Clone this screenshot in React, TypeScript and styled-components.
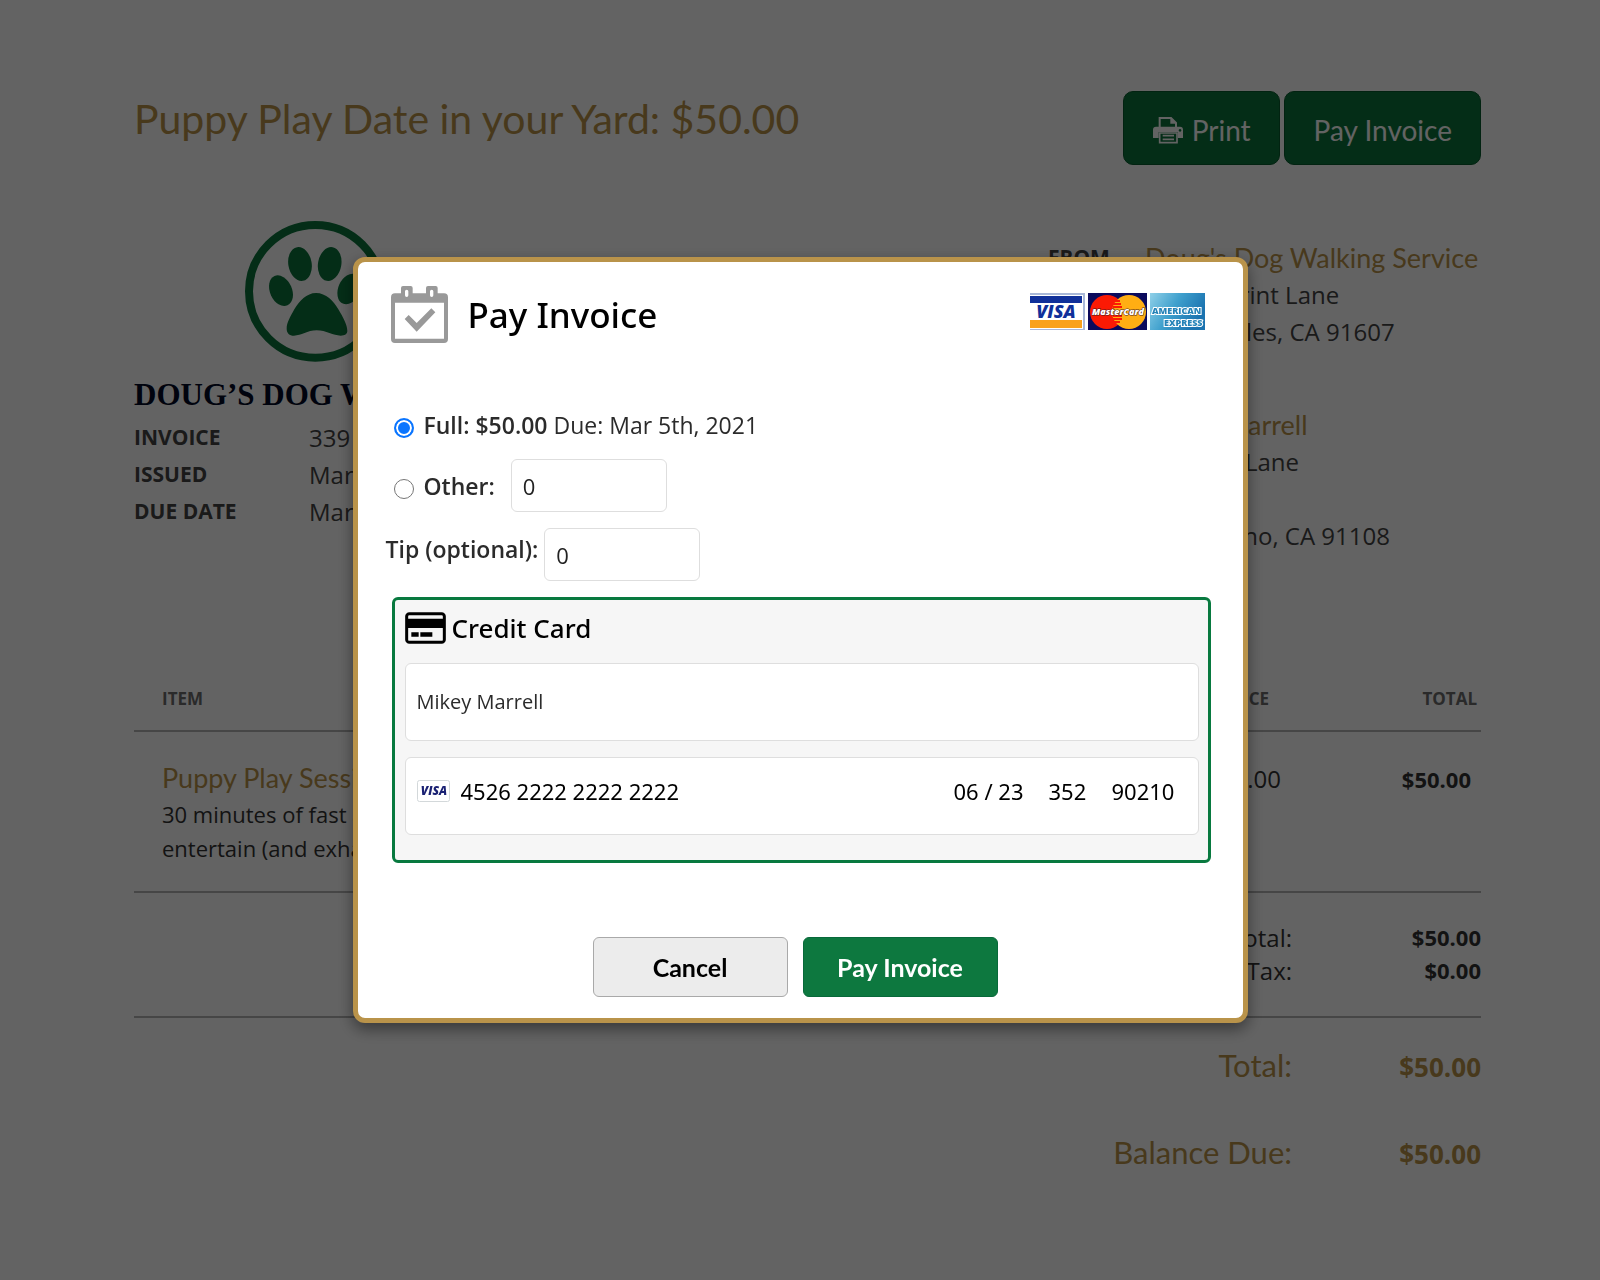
import React, { useState } from "react";
import styled, { createGlobalStyle } from "styled-components";

const sans = `"Open Sans", "Noto Sans", sans-serif`;
const lato = `Lato, "Open Sans", sans-serif`;
const gold = "#b9934a";
const green = "#0b753c";

const GlobalStyle = createGlobalStyle`
  *, *::before, *::after { box-sizing: border-box; }
  body { margin: 0; background: #fff; color: #333; font: 400 24px/34px ${sans}; }
  h1, h2, h3, p, dl, dd, dt { margin: 0; font-weight: inherit; }
  button, input { font-family: inherit; }
`;

/* ---------- invoice page ---------- */

const Page = styled.main`
  min-height: 100vh;
  padding: 91px 119px 40px 134px;
`;

const PageHeader = styled.header`
  display: flex;
  justify-content: space-between;
  align-items: flex-start;
`;

const PageTitle = styled.h1`
  font: 400 41px/56px ${lato};
  color: ${gold};
`;

const HeaderActions = styled.div`
  display: flex;
  gap: 4px;
`;

const HeaderButton = styled.button`
  display: flex;
  align-items: center;
  gap: 9px;
  height: 74px;
  padding: 4px 28px 0 29px;
  border: 1px solid #075a2c;
  border-radius: 10px;
  background: ${green};
  color: #fff;
  font: 400 28px/36px ${lato};
`;

const Info = styled.section`
  display: flex;
  justify-content: space-between;
  align-items: flex-start;
  margin-top: 56px;
`;

const Brand = styled.div`
  width: 362px;
`;

const BrandMark = styled.svg`
  display: block;
  margin: 0 auto;
`;

const BrandName = styled.p`
  margin: 13px 0 4px;
  font: 700 31px/40px "Liberation Serif", serif;
  color: #020824;
  white-space: nowrap;
`;

const Details = styled.dl`
  display: grid;
  grid-template-columns: 175px 1fr;
  line-height: 37px;
`;

const DetailLabel = styled.dt`
  font-size: 21px;
  font-weight: 700;
  color: #444;
`;

const DetailValue = styled.dd`
  color: #444;
`;

const Parties = styled.div`
  display: grid;
  gap: 56px;
  padding-top: 18px;
`;

const Party = styled.div`
  display: grid;
  grid-template-columns: 97px 336px;
  line-height: 37px;
`;

const PartyLabel = styled.span`
  font-size: 21px;
  font-weight: 700;
  color: #444;
`;

const PartyName = styled.h2`
  font: 400 27px/37px ${lato};
  color: ${gold};
  white-space: nowrap;
`;

const AddressLine = styled.p`
  min-height: 37px;
  color: #444;
  white-space: nowrap;
`;

const Items = styled.table`
  width: 100%;
  margin-top: 112px;
  border-collapse: separate;
  border-spacing: 0;
`;

const ItemHead = styled.th<{ $align?: string; $right?: number; $width?: number }>`
  width: ${(p) => (p.$width ? `${p.$width}px` : "auto")};
  padding: 20px ${(p) => p.$right ?? 28}px 18px 28px;
  border-bottom: 2px solid #b5b5b5;
  text-align: ${(p) => p.$align ?? "left"};
  font-size: 17px;
  line-height: 26px;
  font-weight: 700;
  color: #6c6c6c;
`;

const ItemCell = styled.td<{ $right?: number; $bold?: boolean; $amount?: boolean }>`
  padding: 27px ${(p) => p.$right ?? 28}px 26px 28px;
  border-bottom: 2px solid #b5b5b5;
  vertical-align: top;
  text-align: ${(p) => (p.$amount ? "right" : "left")};
  font-size: ${(p) => (p.$amount && !p.$bold ? 24 : 22)}px;
  line-height: ${(p) => (p.$amount ? 40 : 34)}px;
  font-weight: ${(p) => (p.$bold ? 700 : 400)};
`;

const ItemName = styled.h3`
  font: 400 27px/38px ${lato};
  color: ${gold};
`;

const ItemText = styled.p`
  max-width: 380px;
`;

const Sums = styled.dl`
  display: grid;
  grid-template-columns: 1fr 189px;
  padding: 28px 0 29px;
  border-bottom: 2px solid #b5b5b5;
  line-height: 33px;
  text-align: right;
`;

const SumValue = styled.dd`
  font-size: 22px;
  font-weight: 700;
`;

const Totals = styled.dl`
  display: grid;
  grid-template-columns: 1fr 189px;
  row-gap: 37px;
  align-items: baseline;
  margin-top: 23px;
  text-align: right;
  color: ${gold};
`;

const TotalLabel = styled.dt`
  font: 400 31px/48px ${lato};
`;

const TotalValue = styled.dd`
  font-size: 26px;
  line-height: 48px;
  font-weight: 700;
`;

/* ---------- payment dialog ---------- */

const Overlay = styled.div`
  position: fixed;
  inset: 0;
  display: grid;
  place-items: center;
  background: rgba(0, 0, 0, 0.61);
`;

const Dialog = styled.form`
  width: 895px;
  max-width: 94vw;
  padding: 24px 32px 21px 28px;
  border: 5px solid ${gold};
  border-radius: 12px;
  background: #fff;
  box-shadow: 0 6px 16px rgba(0, 0, 0, 0.45);
`;

const DialogHeader = styled.header`
  display: flex;
  align-items: center;
  gap: 20px;
  padding: 0 6px 0 5px;
`;

const DialogTitle = styled.h2`
  flex: 1;
  font: 500 35px/56px "Noto Sans", sans-serif;
  color: #000;
`;

const Brands = styled.div`
  display: flex;
  gap: 3px;
  padding-bottom: 6px;
`;

const Fields = styled.div`
  display: grid;
  gap: 16px;
  margin-top: 64px;
  font-size: 23px;
`;

const Choice = styled.div`
  display: flex;
  align-items: center;
  padding-left: 8px;
`;

const ChoiceLabel = styled.label`
  margin: 0 16px 0 10px;
  line-height: 36px;
  color: #2b2b2b;
`;

const TipRow = styled.div`
  display: flex;
  align-items: center;
  gap: 6px;
`;

const TipLabel = styled.label`
  padding-bottom: 12px;
  line-height: 36px;
  font-weight: 600;
  color: #2b2b2b;
`;

const Strong = styled.strong`
  font-weight: 600;
`;

const Radio = styled.input`
  appearance: none;
  width: 20px;
  height: 20px;
  margin: 6px 0 0;
  border: 1px solid #767676;
  border-radius: 50%;
  background: #fff;

  &:checked {
    border: 2px solid #0a75ff;
    background: #0a75ff;
    box-shadow: inset 0 0 0 2px #fff;
  }
`;

const AmountInput = styled.input`
  width: 156px;
  height: 53px;
  padding: 0 11px;
  border: 1px solid #dedede;
  border-radius: 6px;
  background: #fff;
  font-size: 22px;
  color: #222;
`;

const CardBox = styled.section`
  margin: 16px 0 0 6px;
  padding: 9px 9px 25px 10px;
  border: 3px solid #08793f;
  border-radius: 6px;
  background: #f6f6f6;
`;

const CardHeading = styled.div`
  display: flex;
  align-items: center;
  gap: 6px;
`;

const CardTitle = styled.h3`
  font: 500 26px/38px "Noto Sans", sans-serif;
  color: #000;
`;

const CardField = styled.div<{ $raised?: boolean }>`
  display: flex;
  align-items: center;
  height: 78px;
  margin-top: 16px;
  padding: 0 11px ${(p) => (p.$raised ? 10 : 0)}px;
  border: 1px solid #dedede;
  border-radius: 6px;
  background: #fff;
`;

const BareInput = styled.input<{ $width?: number; $dark?: boolean }>`
  flex: ${(p) => (p.$width ? `0 0 ${p.$width}px` : "1 1 0")};
  min-width: 0;
  padding: 0;
  border: 0;
  outline: 0;
  background: transparent;
  font-size: ${(p) => (p.$dark ? 22 : 20)}px;
  font-family: ${(p) => (p.$dark ? `"Noto Sans", sans-serif` : sans)};
  line-height: 32px;
  color: ${(p) => (p.$dark ? "#000" : "#2b2b2b")};
`;

const CardBadge = styled.svg`
  flex: none;
  margin-right: 11px;
`;

const Actions = styled.div`
  display: flex;
  justify-content: center;
  gap: 15px;
  margin-top: 74px;
  padding-right: 6px;
`;

const ActionButton = styled.button<{ $primary?: boolean }>`
  width: 195px;
  height: 60px;
  border: 1px solid ${(p) => (p.$primary ? "#08693a" : "#a9a9a9")};
  border-radius: 6px;
  background: ${(p) => (p.$primary ? "#0d783f" : "#ececec")};
  color: ${(p) => (p.$primary ? "#fff" : "#000")};
  font: 700 25px/36px ${lato};
`;

/* ---------- drawings ---------- */

const PrintIcon = () => (
  <svg width="30" height="27" viewBox="0 0 90 81" fill="none" aria-hidden="true">
    <path d="M20 30V3h34l15 15v12" stroke="#fff" strokeWidth="6" />
    <path d="M52 0v20h20z" fill="#fff" />
    <path
      fillRule="evenodd"
      d="M9 29h72a9 9 0 0 1 9 9v25H75V45H17v18H0V38a9 9 0 0 1 9-9zm72 7a4 4 0 1 0 .1 0z"
      fill="#fff"
    />
    <path d="M20 48h52v29H20zM29 56h34M29 67h34" stroke="#fff" strokeWidth="5" />
  </svg>
);

const PawLogo = () => (
  <BrandMark width="141" height="141" viewBox="0 0 423 423" fill={green} role="img" aria-label="Paw">
    <circle cx="211" cy="211" r="199" fill="none" stroke={green} strokeWidth="24" />
    <ellipse cx="165" cy="129" rx="35" ry="51" transform="rotate(-10 165 129)" />
    <ellipse cx="254" cy="129" rx="35" ry="51" transform="rotate(10 254 129)" />
    <ellipse cx="108" cy="209" rx="33" ry="48" transform="rotate(-24 108 209)" />
    <ellipse cx="313" cy="204" rx="33" ry="48" transform="rotate(24 313 204)" />
    <path d="M213 216c30 0 53 24 67 49 14 24 27 46 27 65 0 9-8 14-20 14-22 0-44-16-72-16s-46 16-68 16c-14 0-22-8-22-21 0-18 11-36 23-58 15-25 37-49 65-49z" />
  </BrandMark>
);

const CalendarIcon = () => (
  <svg width="57" height="57" viewBox="0 0 171 171" fill="#999" aria-hidden="true">
    <path
      fillRule="evenodd"
      d="M12 22h18V6a6 6 0 0 1 6-6h23a6 6 0 0 1 6 6v16h40V6a6 6 0 0 1 6-6h23a6 6 0 0 1 6 6v16h19a12 12 0 0 1 12 12v125a12 12 0 0 1-12 12H12a12 12 0 0 1-12-12V34a12 12 0 0 1 12-12zM12 50v108h147V50zM47 11a5 5 0 0 0-5 5v12a5 5 0 0 0 10 0V16a5 5 0 0 0-5-5zM122 11a5 5 0 0 0-5 5v12a5 5 0 0 0 10 0V16a5 5 0 0 0-5-5z"
    />
    <path d="M41 99l12-12 24 24 44-44 12 12-56 58z" />
  </svg>
);

const CreditCardIcon = () => (
  <svg width="41" height="32" viewBox="0 0 123 96" aria-hidden="true">
    <rect x="5" y="5" width="113" height="86" rx="8" fill="none" stroke="#000" strokeWidth="9" />
    <path d="M4 20h115v28H4zM19 61h22v13H19zM46 61h36v13H46z" />
  </svg>
);

const VisaLogo = () => (
  <svg width="55" height="37" viewBox="0 0 55 37" role="img" aria-label="Visa">
    <rect x="0" y="0" width="55" height="37" fill="#a9b8d8" />
    <rect x="0" y="2" width="53" height="34" fill="#fff" />
    <rect x="0" y="3" width="52" height="7" fill="#10309a" />
    <rect x="0" y="27" width="52" height="8" fill="#f9a11b" />
    <text x="26" y="25" textAnchor="middle" fontFamily="Open Sans, sans-serif" fontWeight="800" fontStyle="italic" fontSize="18" fill="#10309a">
      VISA
    </text>
  </svg>
);

const MasterCardLogo = () => (
  <svg width="59" height="37" viewBox="0 0 59 37" role="img" aria-label="MasterCard">
    <rect width="59" height="37" fill="#0b0a5c" />
    <circle cx="19" cy="19" r="17" fill="#fb1a04" />
    <circle cx="41" cy="19" r="17" fill="#ffae13" />
    <path d="M26 8h6M25 11h8M25 14h9M25 23h9M25 26h9M26 29h6" stroke="#fb1a04" strokeWidth="2" />
    <text x="30" y="22" textAnchor="middle" fontFamily="Open Sans, sans-serif" fontWeight="800" fontStyle="italic" fontSize="9" fill="#fff" stroke="#4a1c1c" strokeWidth="1" paintOrder="stroke">
      MasterCard
    </text>
  </svg>
);

const AmexLogo = () => (
  <svg width="55" height="37" viewBox="0 0 55 37" role="img" aria-label="American Express">
    <defs>
      <linearGradient id="amex" x1="0" y1="0" x2="1" y2="0.4">
        <stop offset="0" stopColor="#8fd0e8" />
        <stop offset="0.5" stopColor="#3fa0cd" />
        <stop offset="1" stopColor="#1b73b0" />
      </linearGradient>
    </defs>
    <rect width="55" height="37" fill="url(#amex)" />
    <g fontFamily="Open Sans, sans-serif" fontWeight="800" fontSize="9" fill="#2583b8" stroke="#fff" strokeWidth="2" paintOrder="stroke">
      <text x="2" y="21">AMERICAN</text>
      <text x="14" y="33">EXPRESS</text>
    </g>
  </svg>
);

const VisaBadge = () => (
  <CardBadge width="33" height="22" viewBox="0 0 33 22" role="img" aria-label="Visa">
    <rect x="0.5" y="0.5" width="32" height="21" rx="2" fill="#fff" stroke="#d3d8da" />
    <text x="17" y="15" textAnchor="middle" fontFamily="Open Sans, sans-serif" fontWeight="800" fontStyle="italic" fontSize="12" fill="#1a2173">
      VISA
    </text>
  </CardBadge>
);

/* ---------- data ---------- */

const details = [
  ["INVOICE", "339"],
  ["ISSUED", "Mar 1st, 2021"],
  ["DUE DATE", "Mar 5th, 2021"],
];

const parties = [
  { label: "FROM", name: "Doug's Dog Walking Service", lines: ["12 Pawprint Lane", "Los Angeles, CA 91607"] },
  { label: "TO", name: "Mikey Marrell", lines: ["9 Huntly Lane", "", "San Marino, CA 91108"] },
];

export default function App() {
  const [mode, setMode] = useState("full");
  const [other, setOther] = useState("0");
  const [tip, setTip] = useState("0");

  return (
    <>
      <GlobalStyle />
      <Page>
        <PageHeader>
          <PageTitle>Puppy Play Date in your Yard: $50.00</PageTitle>
          <HeaderActions>
            <HeaderButton type="button">
              <PrintIcon />
              Print
            </HeaderButton>
            <HeaderButton type="button">Pay Invoice</HeaderButton>
          </HeaderActions>
        </PageHeader>

        <Info>
          <Brand>
            <PawLogo />
            <BrandName>DOUG’S DOG WALKING</BrandName>
            <Details>
              {details.map(([label, value]) => (
                <React.Fragment key={label}>
                  <DetailLabel>{label}</DetailLabel>
                  <DetailValue>{value}</DetailValue>
                </React.Fragment>
              ))}
            </Details>
          </Brand>
          <Parties>
            {parties.map((party) => (
              <Party key={party.label}>
                <PartyLabel>{party.label}</PartyLabel>
                <div>
                  <PartyName>{party.name}</PartyName>
                  {party.lines.map((line, i) => (
                    <AddressLine key={i}>{line}</AddressLine>
                  ))}
                </div>
              </Party>
            ))}
          </Parties>
        </Info>

        <Items>
          <thead>
            <tr>
              <ItemHead>ITEM</ItemHead>
              <ItemHead $align="right" $right={23} $width={240}>PRICE</ItemHead>
              <ItemHead $align="right" $right={4} $width={189}>TOTAL</ItemHead>
            </tr>
          </thead>
          <tbody>
            <tr>
              <ItemCell>
                <ItemName>Puppy Play Session</ItemName>
                <ItemText>30 minutes of fast action play to entertain (and exhaust) your pup.</ItemText>
              </ItemCell>
              <ItemCell $amount $right={11}>$50.00</ItemCell>
              <ItemCell $amount $bold $right={10}>$50.00</ItemCell>
            </tr>
          </tbody>
        </Items>

        <Sums>
          <dt>Subtotal:</dt>
          <SumValue>$50.00</SumValue>
          <dt>Tax:</dt>
          <SumValue>$0.00</SumValue>
        </Sums>
        <Totals>
          <TotalLabel>Total:</TotalLabel>
          <TotalValue>$50.00</TotalValue>
          <TotalLabel>Balance Due:</TotalLabel>
          <TotalValue>$50.00</TotalValue>
        </Totals>
      </Page>

      <Overlay>
        <Dialog role="dialog" aria-labelledby="pay-title" onSubmit={(e) => e.preventDefault()}>
          <DialogHeader>
            <CalendarIcon />
            <DialogTitle id="pay-title">Pay Invoice</DialogTitle>
            <Brands>
              <VisaLogo />
              <MasterCardLogo />
              <AmexLogo />
            </Brands>
          </DialogHeader>

          <Fields>
            <Choice>
              <Radio type="radio" id="full" name="amount" checked={mode === "full"} onChange={() => setMode("full")} />
              <ChoiceLabel htmlFor="full">
                <Strong>Full: $50.00</Strong> Due: Mar 5th, 2021
              </ChoiceLabel>
            </Choice>
            <Choice>
              <Radio type="radio" id="other" name="amount" checked={mode === "other"} onChange={() => setMode("other")} />
              <ChoiceLabel htmlFor="other">
                <Strong>Other:</Strong>
              </ChoiceLabel>
              <AmountInput aria-label="Other amount" value={other} onChange={(e) => setOther(e.target.value)} />
            </Choice>
            <TipRow>
              <TipLabel htmlFor="tip">Tip (optional):</TipLabel>
              <AmountInput id="tip" value={tip} onChange={(e) => setTip(e.target.value)} />
            </TipRow>
          </Fields>

          <CardBox>
            <CardHeading>
              <CreditCardIcon />
              <CardTitle>Credit Card</CardTitle>
            </CardHeading>
            <CardField>
              <BareInput aria-label="Name on card" defaultValue="Mikey Marrell" />
            </CardField>
            <CardField $raised>
              <VisaBadge />
              <BareInput $dark aria-label="Card number" defaultValue="4526 2222 2222 2222" />
              <BareInput $dark $width={95} aria-label="Expiry" defaultValue="06 / 23" />
              <BareInput $dark $width={63} aria-label="Security code" defaultValue="352" />
              <BareInput $dark $width={75} aria-label="Postal code" defaultValue="90210" />
            </CardField>
          </CardBox>

          <Actions>
            <ActionButton type="button">Cancel</ActionButton>
            <ActionButton type="submit" $primary>
              Pay Invoice
            </ActionButton>
          </Actions>
        </Dialog>
      </Overlay>
    </>
  );
}
